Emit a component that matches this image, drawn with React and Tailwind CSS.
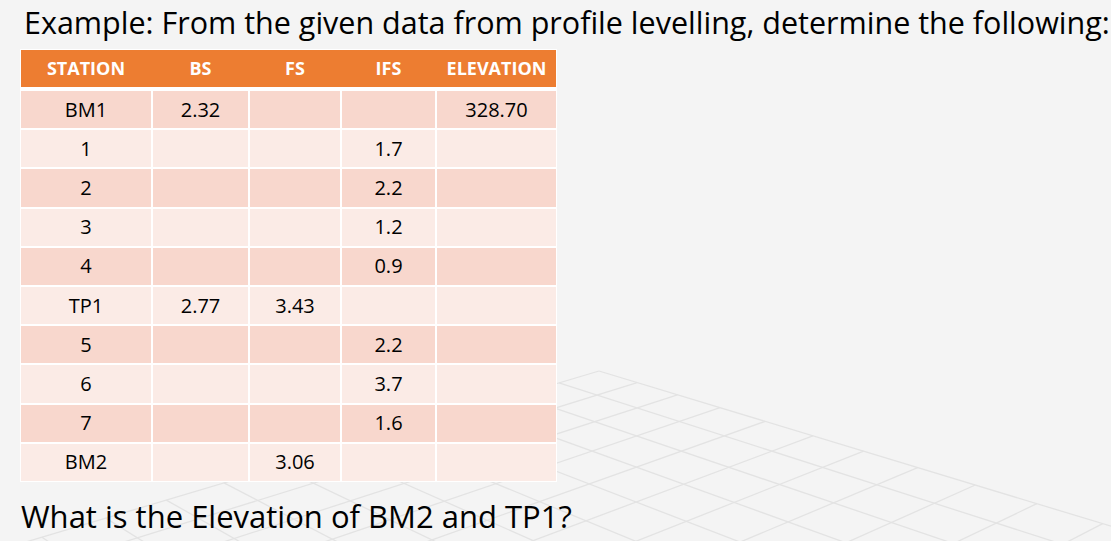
const rows = [
  { station: "BM1", bs: "2.32", fs: "", ifs: "", elev: "328.70" },
  { station: "1", bs: "", fs: "", ifs: "1.7", elev: "" },
  { station: "2", bs: "", fs: "", ifs: "2.2", elev: "" },
  { station: "3", bs: "", fs: "", ifs: "1.2", elev: "" },
  { station: "4", bs: "", fs: "", ifs: "0.9", elev: "" },
  { station: "TP1", bs: "2.77", fs: "3.43", ifs: "", elev: "" },
  { station: "5", bs: "", fs: "", ifs: "2.2", elev: "" },
  { station: "6", bs: "", fs: "", ifs: "3.7", elev: "" },
  { station: "7", bs: "", fs: "", ifs: "1.6", elev: "" },
  { station: "BM2", bs: "", fs: "3.06", ifs: "", elev: "" },
]

const headers = ["STATION", "BS", "FS", "IFS", "ELEVATION"]

// perspective floor grid behind the slide
const project = (u, v) => {
  const w = 1 - 0.0262 * u - 0.0206 * v
  return [(599 + 21.48 * u - 51.5 * v) / w, (371 + 1.546 * u + 4.04 * v) / w]
}

const FloorGrid = () => {
  const lines = []
  for (let v = 0; v <= 12; v++) {
    const [x1, y1] = project(0, v)
    const [x2, y2] = project(14, v)
    lines.push(<line key={"v" + v} x1={x1} y1={y1} x2={x2} y2={y2} />)
  }
  for (let u = 0; u <= 14; u++) {
    const [x1, y1] = project(u, 0)
    const [x2, y2] = project(u, 12)
    lines.push(<line key={"u" + u} x1={x1} y1={y1} x2={x2} y2={y2} />)
  }
  return (
    <svg className="absolute inset-0 w-full h-full" viewBox="0 0 1111 541">
      <g stroke="#e3e3e3" strokeWidth="1.3">{lines}</g>
    </svg>
  )
}

const App = () => {
  return (
    <div className="relative w-[1111px] h-[541px] overflow-hidden bg-[#f4f4f4] font-['Open_Sans',sans-serif] text-black">
      <FloorGrid />
      <div className="relative">
        <h1 className="pl-[24px] pt-[2px] text-[30.5px] leading-[40px] whitespace-nowrap">
          Example: From the given data from profile levelling, determine the following:
        </h1>

        <div className="ml-[20px] mt-[7px] w-[537px] bg-white p-[1px]">
          <div className="grid grid-cols-[130px_95px_90px_93px_1fr] gap-x-[2px] h-[37px] bg-[#ed7d31]">
            {headers.map((h) => (
              <div key={h} className="flex items-center justify-center text-[18px] font-bold text-white bg-[#ed7d31]">
                {h}
              </div>
            ))}
          </div>
          <div className="mt-[4px] flex flex-col gap-y-[2px]">
            {rows.map((r, i) => (
              <div
                key={r.station}
                className="grid grid-cols-[130px_95px_90px_93px_1fr] gap-x-[2px] h-[37.2px] bg-white"
              >
                {[r.station, r.bs, r.fs, r.ifs, r.elev].map((c, j) => (
                  <div
                    key={j}
                    className={`flex items-center justify-center text-[20px] ${i % 2 === 0 ? "bg-[#f8d7cd]" : "bg-[#fbebe6]"}`}
                  >
                    {c}
                  </div>
                ))}
              </div>
            ))}
          </div>
        </div>

        <p className="pl-[21px] mt-[14px] text-[31px] leading-[40px] whitespace-nowrap">
          What is the Elevation of BM2 and TP1?
        </p>
      </div>
    </div>
  )
}

export default App
